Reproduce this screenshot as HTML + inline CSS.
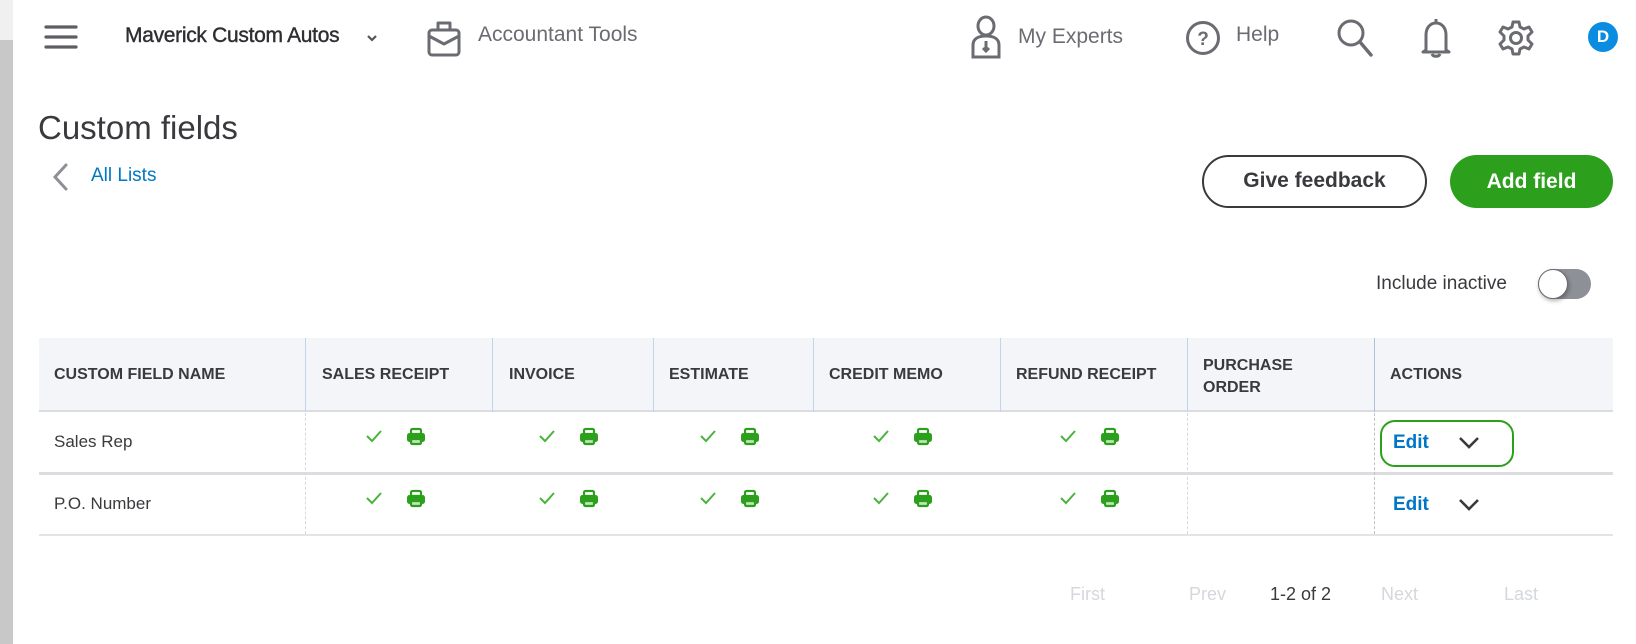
<!DOCTYPE html>
<html><head><meta charset="utf-8"><style>
*{box-sizing:border-box;margin:0;padding:0}
body{width:1636px;height:644px;background:#fff;font-family:"Liberation Sans",sans-serif;color:#393a3d;position:relative;overflow:hidden}
.a{position:absolute;white-space:nowrap}
.nav{color:#6b6c72;font-size:21px}
.th{font-weight:bold;font-size:16px;color:#393a3d}
.td{font-size:17px;color:#393a3d}
.pg{font-size:18px;color:#d4d7dc}
</style></head><body>
<div class="a" style="left:0;top:0;width:13px;height:644px;background:#c8c8c8"></div>
<div class="a" style="left:0;top:0;width:13px;height:40px;background:#f0f0f0"></div>
<svg class="a" style="left:44px;top:24px" width="34" height="26"><g stroke="#5d5e63" stroke-width="3.2" stroke-linecap="round"><line x1="2" y1="3" x2="32" y2="3"/><line x1="2" y1="13" x2="32" y2="13"/><line x1="2" y1="23" x2="32" y2="23"/></g></svg>
<div class="a" style="left:125px;top:24px;font-size:21px;color:#2d2e31;letter-spacing:-0.3px;-webkit-text-stroke:0.4px #2d2e31">Maverick Custom Autos</div>
<svg class="a" style="left:366px;top:34px" width="12" height="9"><path d="M2 2l4 4 4-4" stroke="#555" stroke-width="2.2" fill="none"/></svg>
<svg class="a" style="left:426px;top:18px" width="36" height="40"><g stroke="#6b6c72" stroke-width="3" fill="none" stroke-linejoin="round"><rect x="3" y="12" width="30" height="25" rx="3"/><path d="M12 12V5h12v7"/><path d="M3 18l15 8 15-8"/></g></svg>
<div class="a nav" style="left:478px;top:23px">Accountant Tools</div>
<svg class="a" style="left:970px;top:15px" width="32" height="44"><g stroke="#6b6c72" stroke-width="3" fill="none"><ellipse cx="16" cy="11" rx="8" ry="9"/><path d="M3 42V30c0-6 5-9 13-9s13 3 13 9v12z"/><path d="M16 26v10M13 33l3 3 3-3"/></g></svg>
<div class="a nav" style="left:1018px;top:25px">My Experts</div>
<svg class="a" style="left:1185px;top:20px" width="36" height="36"><circle cx="18" cy="18" r="15.5" stroke="#6b6c72" stroke-width="3" fill="none"/><text x="18" y="25" text-anchor="middle" font-family="Liberation Sans" font-weight="bold" font-size="19" fill="#6b6c72">?</text></svg>
<div class="a nav" style="left:1236px;top:23px">Help</div>
<svg class="a" style="left:1336px;top:18px" width="38" height="40"><circle cx="15" cy="15" r="12" stroke="#6b6c72" stroke-width="3" fill="none"/><path d="M24 24l11 13" stroke="#6b6c72" stroke-width="3.4" stroke-linecap="round"/></svg>
<svg class="a" style="left:1420px;top:16px" width="32" height="42"><g stroke="#6b6c72" stroke-width="3" fill="none" stroke-linejoin="round"><path d="M16 3v4M6 34V19c0-7 4-12 10-12s10 5 10 12v15l3 2H3z"/><path d="M12 38c1 3 7 3 8 0"/></g></svg>
<svg class="a" style="left:1497px;top:19px" width="38" height="38"><g stroke="#6b6c72" stroke-width="3" fill="none" stroke-linejoin="round"><path d="M16 3h6l1 5 4 2 5-2 3 5-4 4v4l4 4-3 5-5-2-4 2-1 5h-6l-1-5-4-2-5 2-3-5 4-4v-4L3 13l3-5 5 2 4-2z"/><circle cx="19" cy="19" r="5.5"/></g></svg>
<div class="a" style="left:1588px;top:22px;width:30px;height:30px;border-radius:50%;background:#0a8ce0;color:#fff;font-weight:bold;font-size:17px;text-align:center;line-height:30px">D</div>

<div class="a" style="left:38px;top:109px;font-size:33px;color:#393a3d">Custom fields</div>
<svg class="a" style="left:50px;top:162px" width="20" height="30"><path d="M16 3L5 15l11 12" stroke="#8d9096" stroke-width="3" fill="none" stroke-linecap="round"/></svg>
<div class="a" style="left:91px;top:165px;font-size:19px;color:#0077c5">All Lists</div>

<div class="a" style="left:1202px;top:155px;width:225px;height:53px;border:2.5px solid #393a3d;border-radius:27px;font-weight:bold;font-size:21px;text-align:center;line-height:48px">Give feedback</div>
<div class="a" style="left:1450px;top:155px;width:163px;height:53px;background:#2ca01c;border-radius:27px;font-weight:bold;font-size:21px;text-align:center;line-height:53px;color:#fff">Add field</div>

<div class="a" style="left:1376px;top:273px;font-size:19px;color:#393a3d">Include inactive</div>
<div class="a" style="left:1538px;top:269px;width:53px;height:30px;border-radius:15px;background:#8d9096"></div>
<div class="a" style="left:1538px;top:269px;width:30px;height:30px;border-radius:50%;background:#fff;border:1.5px solid #6b6c72;box-shadow:1px 2px 4px rgba(0,0,0,.3)"></div>

<div class="a" style="left:39px;top:338px;width:1574px;height:74px;background:#f4f5f8;border-bottom:2px solid #dcdde0"></div>
<div class="a" style="left:39px;top:472px;width:1574px;height:3px;background:#dcdde0"></div>
<div class="a" style="left:39px;top:534px;width:1574px;height:2px;background:#e3e4e7"></div>
<div class="a" style="left:305px;top:338px;width:1px;height:74px;background:#c4d3e6"></div>
<div class="a" style="left:492px;top:338px;width:1px;height:74px;background:#c4d3e6"></div>
<div class="a" style="left:653px;top:338px;width:1px;height:74px;background:#c4d3e6"></div>
<div class="a" style="left:813px;top:338px;width:1px;height:74px;background:#c4d3e6"></div>
<div class="a" style="left:1000px;top:338px;width:1px;height:74px;background:#c4d3e6"></div>
<div class="a" style="left:1187px;top:338px;width:1px;height:74px;background:#c4d3e6"></div>
<div class="a" style="left:1374px;top:338px;width:1px;height:74px;background:#b0c0d8"></div>
<div class="a" style="left:305px;top:413px;height:121px;border-left:1px dashed #d8d9dc"></div>
<div class="a" style="left:1187px;top:413px;height:121px;border-left:1px dashed #d8d9dc"></div>
<div class="a" style="left:1374px;top:413px;height:121px;border-left:1.5px dashed #c0c1c4"></div>

<div class="a th" style="left:54px;top:366px">CUSTOM FIELD NAME</div>
<div class="a th" style="left:322px;top:366px">SALES RECEIPT</div>
<div class="a th" style="left:509px;top:366px">INVOICE</div>
<div class="a th" style="left:669px;top:366px">ESTIMATE</div>
<div class="a th" style="left:829px;top:366px">CREDIT MEMO</div>
<div class="a th" style="left:1016px;top:366px">REFUND RECEIPT</div>
<div class="a th" style="left:1203px;top:355px;line-height:22px">PURCHASE<br>ORDER</div>
<div class="a th" style="left:1390px;top:366px">ACTIONS</div>

<div class="a td" style="left:54px;top:432px">Sales Rep</div>
<div class="a td" style="left:54px;top:494px">P.O. Number</div>

<svg width="0" height="0" style="position:absolute"><defs>
<g id="ic"><path d="M1 9l5 5 9-10" stroke="#4cb33e" stroke-width="2" fill="none"/><g transform="translate(41,1)"><rect x="4" y="1" width="10" height="5" rx="1.5" fill="none" stroke="#2ca01c" stroke-width="2.2"/><rect x="0" y="5" width="18" height="9" rx="2.5" fill="#2ca01c"/><rect x="4" y="11" width="10" height="5" rx="1.5" fill="#bfe5b8" stroke="#2ca01c" stroke-width="2.2"/></g></g>
</defs></svg>
<svg class="a" style="left:366px;top:427px" width="64" height="20"><use href="#ic"/></svg>
<svg class="a" style="left:539px;top:427px" width="64" height="20"><use href="#ic"/></svg>
<svg class="a" style="left:700px;top:427px" width="64" height="20"><use href="#ic"/></svg>
<svg class="a" style="left:873px;top:427px" width="64" height="20"><use href="#ic"/></svg>
<svg class="a" style="left:1060px;top:427px" width="64" height="20"><use href="#ic"/></svg>
<svg class="a" style="left:366px;top:489px" width="64" height="20"><use href="#ic"/></svg>
<svg class="a" style="left:539px;top:489px" width="64" height="20"><use href="#ic"/></svg>
<svg class="a" style="left:700px;top:489px" width="64" height="20"><use href="#ic"/></svg>
<svg class="a" style="left:873px;top:489px" width="64" height="20"><use href="#ic"/></svg>
<svg class="a" style="left:1060px;top:489px" width="64" height="20"><use href="#ic"/></svg>

<div class="a" style="left:1380px;top:420px;width:134px;height:47px;border:2.5px solid #2ca01c;border-radius:15px"></div>
<div class="a" style="left:1393px;top:432px;font-weight:bold;font-size:19px;color:#0077c5">Edit</div>
<div class="a" style="left:1393px;top:494px;font-weight:bold;font-size:19px;color:#0077c5">Edit</div>
<svg class="a" style="left:1458px;top:436px" width="22" height="14"><path d="M2 2l9 9 9-9" stroke="#393a3d" stroke-width="2.6" fill="none"/></svg>
<svg class="a" style="left:1458px;top:498px" width="22" height="14"><path d="M2 2l9 9 9-9" stroke="#393a3d" stroke-width="2.6" fill="none"/></svg>

<div class="a pg" style="left:1070px;top:584px">First</div>
<div class="a pg" style="left:1189px;top:584px">Prev</div>
<div class="a pg" style="left:1270px;top:584px;color:#393a3d">1-2 of 2</div>
<div class="a pg" style="left:1381px;top:584px">Next</div>
<div class="a pg" style="left:1504px;top:584px">Last</div>
</body></html>
